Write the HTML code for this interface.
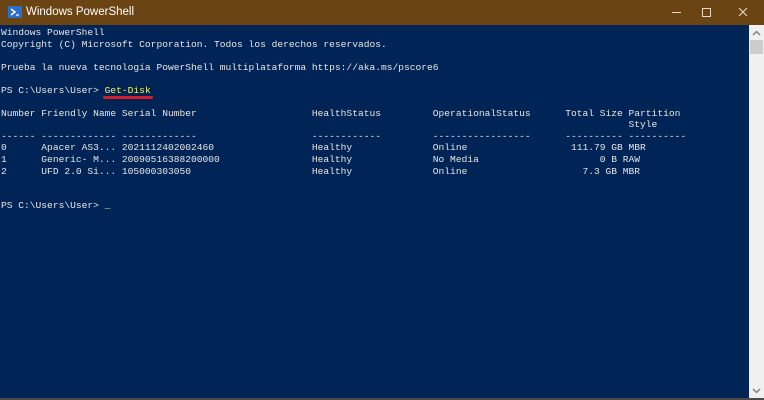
<!DOCTYPE html>
<html><head><meta charset="utf-8"><style>
html,body{margin:0;padding:0;width:764px;height:400px;overflow:hidden;background:#012456;}
.title{position:absolute;left:0;top:0;width:764px;height:25px;background:#6b4413;color:#fff;font-family:"Liberation Sans",sans-serif;font-size:11.5px;}
.title .t{position:absolute;left:26px;top:6px;}
.icon{position:absolute;left:8px;top:6px;width:14px;height:12px;background:#2a6fc9;}
.ctl{position:absolute;top:0;width:40px;height:25px;color:#e8d9c2;}
pre{position:absolute;left:1px;top:27px;margin:0;font-family:"Liberation Mono",monospace;font-size:9.6px;line-height:11.55px;color:#e6e6e6;}
.y{color:#f3f35a;}
.ul{position:absolute;left:103px;top:96px;width:50px;height:3px;background:#d2202a;border-radius:2px;}
.sb{position:absolute;left:749px;top:25px;width:15px;height:373px;background:#f0f0f0;}
.th{position:absolute;left:750px;top:40px;width:13px;height:14px;background:#cdcdcd;}
.bot{position:absolute;left:0;top:398px;width:764px;height:2px;background:#4a4a4a;}
</style></head><body>
<div class="title"><div class="icon"><svg width="14" height="12"><path d="M3 3 L7 6 L3 9" stroke="#fff" stroke-width="1.5" fill="none"/><path d="M8 9 H11" stroke="#fff" stroke-width="1.2"/></svg></div><span class="t">Windows PowerShell</span>
<div class="ctl" style="left:657px"><svg width="40" height="25"><path d="M15 12.5 H24" stroke="#e8d9c2" stroke-width="1"/></svg></div>
<div class="ctl" style="left:687px"><svg width="40" height="25"><rect x="15.5" y="8.5" width="8" height="8" stroke="#e8d9c2" fill="none"/></svg></div>
<div class="ctl" style="left:724px"><svg width="40" height="25"><path d="M15 8 L23 16 M23 8 L15 16" stroke="#e8d9c2" stroke-width="1.1"/></svg></div>
</div>
<pre>Windows PowerShell
Copyright (C) Microsoft Corporation. Todos los derechos reservados.

Prueba la nueva tecnología PowerShell multiplataforma https://aka.ms/pscore6

PS C:\Users\User&gt; <span class="y">Get-Disk</span>

Number Friendly Name Serial Number                    HealthStatus         OperationalStatus      Total Size Partition
                                                                                                             Style
------ ------------- -------------                    ------------         -----------------      ---------- ----------
0      Apacer AS3... 2021112402002460                 Healthy              Online                  111.79 GB MBR
1      Generic- M... 20090516388200000                Healthy              No Media                     0 B RAW
2      UFD 2.0 Si... 105000303050                     Healthy              Online                    7.3 GB MBR


PS C:\Users\User&gt; <span class="y">_</span></pre>
<div class="ul"></div>
<div class="sb"></div><div class="th"></div>
<svg style="position:absolute;left:751px;top:29px" width="11" height="8"><path d="M2 6 L5.5 2.5 L9 6" stroke="#777" stroke-width="1.3" fill="none"/></svg>
<svg style="position:absolute;left:751px;top:387px" width="11" height="8"><path d="M2 2 L5.5 5.5 L9 2" stroke="#777" stroke-width="1.3" fill="none"/></svg>
<div class="bot"></div>
</body></html>
